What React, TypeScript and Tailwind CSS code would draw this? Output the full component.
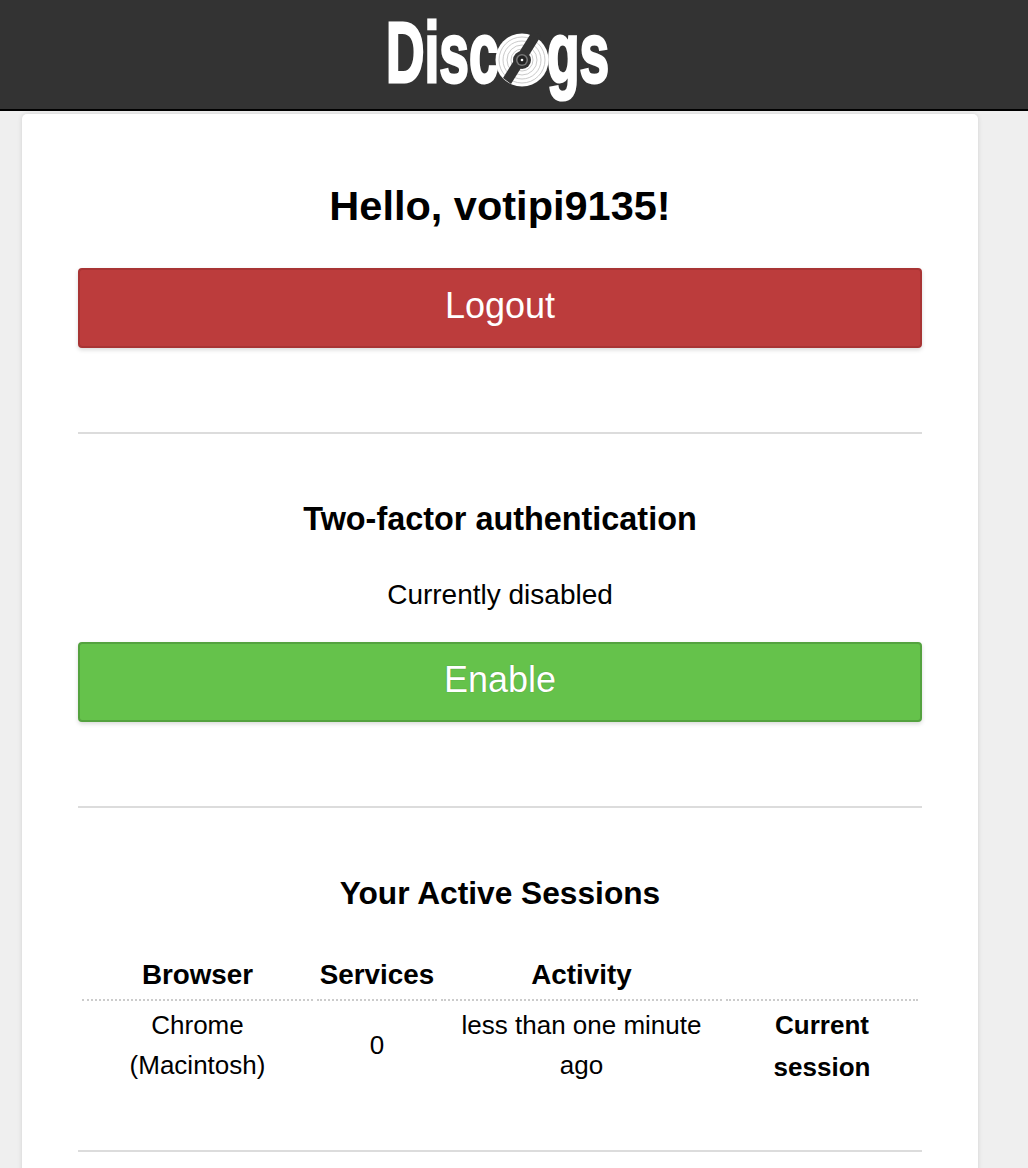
const Logo = () => (
  <div className="flex items-center h-[110px] text-white font-bold font-['Liberation_Sans',sans-serif] [-webkit-text-stroke:3px_white]">
    <div className="relative w-[224px] h-[86px]">
      <span className="absolute left-[-2px] top-[-5px] text-[86px] leading-[90px] origin-left scale-x-[0.62]">Disc</span>
      <svg className="absolute left-[107px] top-[21px]" width="54" height="54" viewBox="0 0 54 54">
        <circle cx="27" cy="27" r="26.5" fill="#fff" />
        {[23, 19, 15, 11].map((r) => (
          <circle key={r} cx="27" cy="27" r={r} fill="none" stroke="#bbb" strokeWidth="0.8" />
        ))}
        <path d="M38 -3 L46 3 L16 51 L8 45 Z" fill="#333" />
        <circle cx="27" cy="27" r="9" fill="#333" />
        <circle cx="27" cy="27" r="6" fill="#777" />
        <circle cx="27" cy="27" r="4.5" fill="#222" />
        <circle cx="27" cy="27" r="1.3" fill="#fff" />
      </svg>
      <span className="absolute left-[159px] top-[-5px] text-[86px] leading-[90px] origin-left scale-x-[0.62]">gs</span>
    </div>
  </div>
);

const App = () => {
  return (
    <div className="h-[1168px] overflow-hidden bg-[#efefef] font-['Liberation_Sans',Arial,sans-serif] text-black">
      <header className="flex h-[111px] justify-center border-b-2 border-black bg-[#333333] pr-[28px]">
        <Logo />
      </header>

      <main className="ml-[22px] mt-[3px] w-[956px] rounded-t-[5px] bg-white px-[56px] pb-[40px] shadow-[0_0_5px_rgba(0,0,0,0.12)]">
        <h1 className="pt-[68px] text-center text-[41.5px] font-bold leading-[48px]">Hello, votipi9135!</h1>
        <button className="mt-[38px] block h-[80px] w-full rounded-[4px] border-2 border-[#a83434] bg-[#bc3c3c] pb-[5px] text-[36px] text-white shadow-[0_2px_4px_rgba(0,0,0,0.15)]">
          Logout
        </button>
        <hr className="mt-[84px] border-t-2 border-[#dcdcdc]" />

        <h2 className="mt-[66px] text-center text-[32.4px] font-bold leading-[38px]">Two-factor authentication</h2>
        <p className="mt-[38px] text-center text-[28px] leading-[38px]">Currently disabled</p>
        <button className="mt-[28px] block h-[80px] w-full rounded-[4px] border-2 border-[#54a23f] bg-[#65c24b] pb-[5px] text-[36px] text-white shadow-[0_2px_4px_rgba(0,0,0,0.15)] [text-shadow:0_0_1px_rgba(0,0,0,0.35)]">
          Enable
        </button>
        <hr className="mt-[84px] border-t-2 border-[#dcdcdc]" />

        <h2 className="mt-[66px] text-center text-[31.7px] font-bold leading-[38px]">Your Active Sessions</h2>

        <table className="mt-[42px] w-full table-fixed border-separate border-spacing-x-[4px] border-spacing-y-0 text-center text-[26px] leading-[40px]">
          <thead className="text-[27.8px] leading-[41px]">
            <tr>
              <th className="w-[231px] border-b-2 border-dotted border-[#cccccc] pb-[4px] font-bold">Browser</th>
              <th className="w-[120px] border-b-2 border-dotted border-[#cccccc] pb-[4px] font-bold">Services</th>
              <th className="w-[281px] border-b-2 border-dotted border-[#cccccc] pb-[4px] font-bold">Activity</th>
              <th className="border-b-2 border-dotted border-[#cccccc] pb-[4px]"></th>
            </tr>
          </thead>
          <tbody>
            <tr>
              <td className="pt-[2px]">Chrome (Macintosh)</td>
              <td className="pt-[2px]">0</td>
              <td className="pt-[2px]">less than one minute ago</td>
              <td className="translate-y-px px-[40px] pt-[2px] font-bold leading-[42px]">Current session</td>
            </tr>
          </tbody>
        </table>
        <hr className="mt-[63px] border-t-2 border-[#dcdcdc]" />
      </main>
    </div>
  );
};

export default App;
